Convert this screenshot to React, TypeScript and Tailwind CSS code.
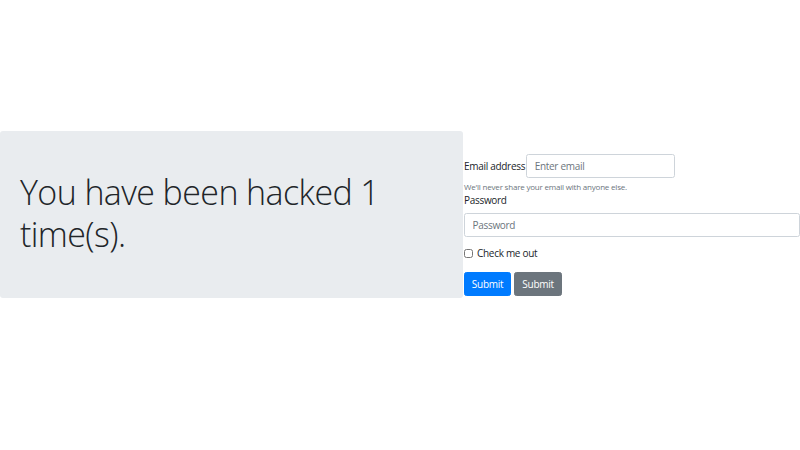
export default function App() {
  return (
    <div className="flex h-[450px] w-[800px] items-start bg-white pt-[131px] font-['Open_Sans',sans-serif] text-[#212529]">
      {/* Jumbotron */}
      <div className="h-[167px] w-[463px] shrink-0 rounded-[3px] bg-[#e9ecef] px-[20px] pt-[40px]">
        <h1 className="text-[34px] font-light leading-[42px] tracking-[-0.6px]">
          You have been hacked 1 time(s).
        </h1>
      </div>

      {/* Form */}
      <form className="ml-[1px] flex flex-1 flex-col pt-[23px] text-[10px] tracking-[-0.3px]">
        <div className="flex h-[24px] items-center">
          <label className="leading-[15px]">Email address</label>
          <input
            type="email"
            placeholder="Enter email"
            className="ml-[1px] h-[24px] w-[149px] rounded-[2.5px] border border-[#ced4da] bg-white px-[7.5px] text-[10px] text-[#495057] outline-none placeholder:text-[#6c757d]"
          />
        </div>
        <small className="mt-[3px] text-[8px] leading-[12px] tracking-[-0.2px] text-[#6c757d]">
          We'll never share your email with anyone else.
        </small>
        <label className="mb-[5px] leading-[15px]">Password</label>
        <input
          type="password"
          placeholder="Password"
          className="h-[24px] w-full rounded-[2.5px] border border-[#ced4da] bg-white px-[7.5px] text-[10px] text-[#495057] outline-none placeholder:text-[#6c757d]"
        />
        <div className="mt-[9px] flex items-center leading-[15px]">
          <input type="checkbox" className="m-0 h-[9px] w-[9px]" />
          <label className="ml-[4px]">Check me out</label>
        </div>
        <div className="mt-[11px] flex gap-[3px]">
          <button
            type="button"
            className="h-[24px] w-[47px] rounded-[2.5px] border border-[#007bff] bg-[#007bff] text-[10px] leading-[15px] text-white"
          >
            Submit
          </button>
          <button
            type="button"
            className="h-[24px] w-[48px] rounded-[2.5px] border border-[#6c757d] bg-[#6c757d] text-[10px] leading-[15px] text-white"
          >
            Submit
          </button>
        </div>
      </form>
    </div>
  );
}
